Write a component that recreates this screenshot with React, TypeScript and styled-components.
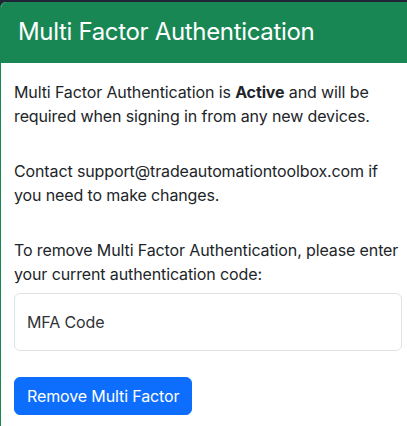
import React from "react";
import styled, { createGlobalStyle } from "styled-components";

const GlobalStyle = createGlobalStyle`
  html, body {
    margin: 0;
    padding: 0;
    background: #1e2536;
  }
  body {
    font-family: Inter, "Noto Sans", "Liberation Sans", sans-serif;
    color: #212529;
    overflow: hidden;
  }
  * { box-sizing: border-box; }
`;

const Card = styled.section`
  margin-top: 2px;
  border-left: 1px solid #198754;
  border-top-left-radius: 6px;
  overflow: hidden;
  background: #ffffff;
  height: 424px;
`;

const Header = styled.header`
  background: #198754;
  padding: 15px 17px 17px;
`;

const Title = styled.h1`
  margin: 0;
  font-size: 24px;
  line-height: 29px;
  font-weight: 400;
  letter-spacing: -0.33px;
  color: #ffffff;
`;

const Body = styled.div`
  padding: 17px 5px 10px 13px;
  letter-spacing: -0.12px;
`;

const Para = styled.p<{ $gap?: number }>`
  margin: 0 0 ${(p) => (p.$gap ?? 31)}px;
  font-size: 16px;
  line-height: 24px;
`;

const CodeInput = styled.input`
  display: block;
  width: 100%;
  height: 58px;
  padding: 0 12px;
  border: 1px solid #dee2e6;
  border-radius: 6px;
  font-family: inherit;
  font-size: 16px;
  letter-spacing: -0.12px;
  color: #212529;
  background: #ffffff;
  outline: none;
  &::placeholder {
    color: #2f3337;
  }
`;

const Button = styled.button`
  display: inline-flex;
  align-items: center;
  margin-top: 26px;
  height: 38px;
  padding: 0 12px;
  border: 1px solid #0d6efd;
  border-radius: 6px;
  background: #0d6efd;
  color: #ffffff;
  font-family: inherit;
  font-size: 16px;
  line-height: 24px;
  letter-spacing: -0.12px;
  cursor: pointer;
`;

export default function App() {
  return (
    <>
      <GlobalStyle />
      <Card>
        <Header>
          <Title>Multi Factor Authentication</Title>
        </Header>
        <Body>
          <Para>
            Multi Factor Authentication is <strong>Active</strong> and will be
            required when signing in from any new devices.
          </Para>
          <Para>
            Contact support@tradeautomationtoolbox.com if you need to make
            changes.
          </Para>
          <Para $gap={7}>
            To remove Multi Factor Authentication, please enter your current
            authentication code:
          </Para>
          <CodeInput type="text" placeholder="MFA Code" />
          <Button type="button">Remove Multi Factor</Button>
        </Body>
      </Card>
    </>
  );
}
